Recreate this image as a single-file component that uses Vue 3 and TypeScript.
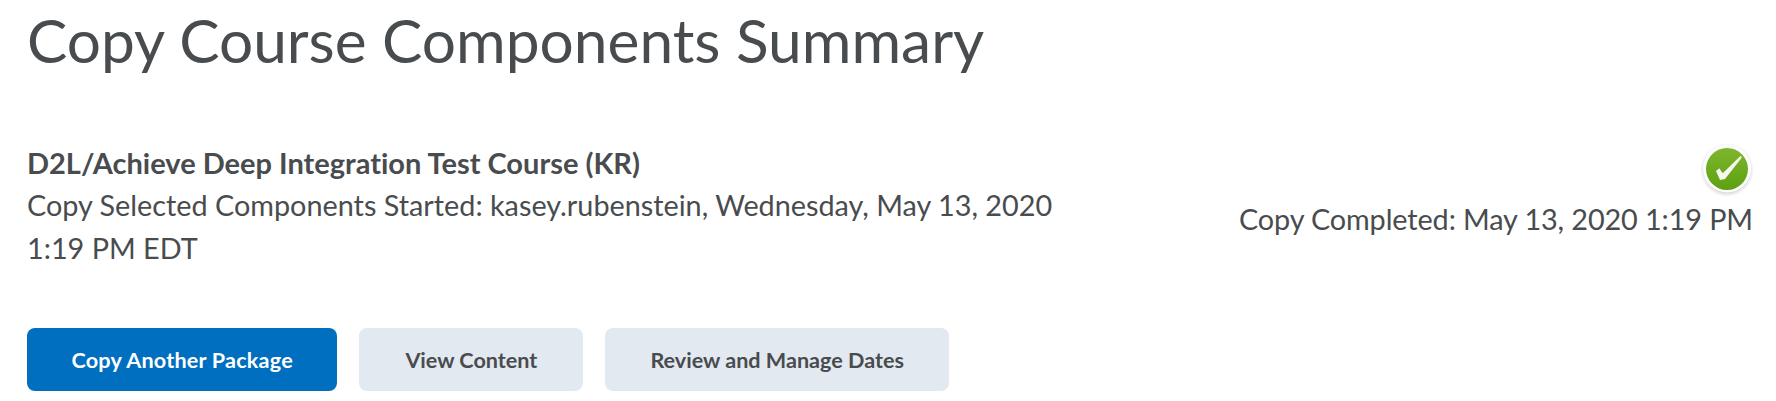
<script setup lang="ts">
const title = 'Copy Course Components Summary'
</script>
<template>
  <main class="page">
    <h1 class="title">{{ title }}</h1>
    <section class="summary">
      <div class="info">
        <div class="name">D2L/Achieve Deep Integration Test Course (KR)</div>
        <div class="line">Copy Selected Components Started: kasey.rubenstein, Wednesday, May 13, 2020<br>1:19 PM EDT</div>
      </div>
      <div class="status">
        <svg class="check" viewBox="-28 -28 56 56" width="56" height="56">
          <defs>
            <linearGradient id="g" x1="0" y1="0" x2="0" y2="1">
              <stop offset="0" stop-color="#7db62c"/>
              <stop offset="1" stop-color="#5f9f12"/>
            </linearGradient>
            <radialGradient id="halo">
              <stop offset="0.8" stop-color="#cfcfcf"/>
              <stop offset="0.9" stop-color="#ececec"/>
              <stop offset="1" stop-color="#ffffff"/>
            </radialGradient>
          </defs>
          <circle cx="0" cy="1" r="27" fill="url(#halo)"/>
          <circle cx="0" cy="-0.5" r="24" fill="#fdfdfd"/>
          <circle cx="0" cy="0" r="21" fill="url(#g)"/>
          <path d="M-11 2L-7.7-.7L-4.3 4.3L13.7-13.3L14.7-11.3L-2 10L-7 11Z" fill="#f6f8f0"/>
        </svg>
        <div class="line done">Copy Completed: May 13, 2020 1:19 PM</div>
      </div>
    </section>
    <div class="actions">
      <button class="btn primary">Copy Another Package</button>
      <button class="btn">View Content</button>
      <button class="btn wide">Review and Manage Dates</button>
    </div>
  </main>
</template>
<style scoped>
.page { width: 1776px; height: 401px; box-sizing: border-box; padding: 0 23px 0 27px; font-family: Lato, sans-serif; font-variant-ligatures: none; color: #494c4e; overflow: hidden; }
.title { margin: 0; font-size: 60.4px; font-weight: 400; line-height: 80px; }
.summary { display: flex; justify-content: space-between; margin-top: 62px; }
.info { width: 1060px; }
.name { font-size: 29px; font-weight: 700; line-height: 42px; }
.line { font-size: 28.8px; line-height: 43px; }
.done { letter-spacing: -0.1px; }
.status { display: flex; flex-direction: column; align-items: flex-end; }
.check { margin: -1px -2px 1px 0; }
.actions { display: flex; gap: 22px; margin-top: 58px; }
.btn { height: 63px; padding: 0 46px; border: 0; border-radius: 8px; background: #e3e9f1; color: #494c4e; font-family: Lato, sans-serif; font-variant-ligatures: none; font-size: 21.6px; font-weight: 700; }
.primary { background: #006fbf; color: #fff; padding: 0 44.5px; letter-spacing: 0.2px; }
.wide { padding: 0 45px; }
</style>
